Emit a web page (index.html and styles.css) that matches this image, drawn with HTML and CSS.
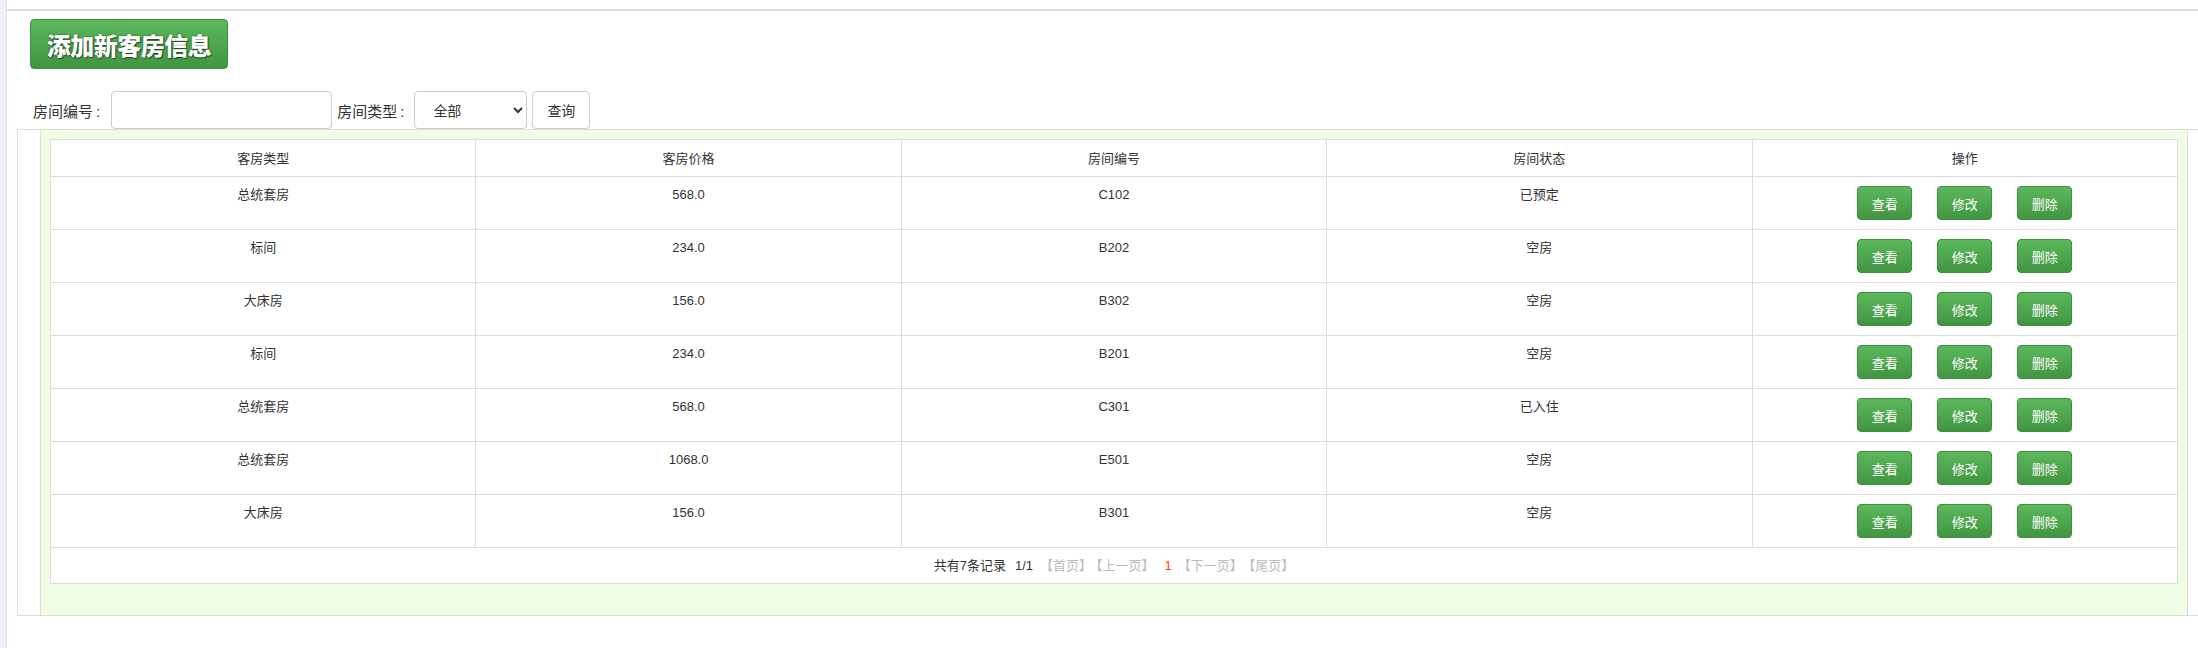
FILE: index.html
```html
<!DOCTYPE html>
<html lang="zh-CN">
<head>
<meta charset="utf-8">
<title>客房信息</title>
<link rel="stylesheet" href="styles.css">
</head>
<body>
<div class="app">
  <div class="side"></div>
  <div class="main">
    <div class="topbar"></div>
    <div class="actions"><button class="btn-add" type="button">添加新客房信息</button></div>
    <form class="search">
      <label class="lbl">房间编号<span class="colon">:</span></label>
      <input class="txt" type="text">
      <label class="lbl lbl-type">房间类型<span class="colon">:</span></label>
      <select class="sel"><option>全部</option></select>
      <button class="btn-query" type="button">查询</button>
    </form>
    <div class="box">
      <div class="box-left"></div>
      <div class="box-main">
        <table class="grid">
          <thead>
            <tr><th>客房类型</th><th>客房价格</th><th>房间编号</th><th>房间状态</th><th>操作</th></tr>
          </thead>
          <tbody>
            <tr><td>总统套房</td><td>568.0</td><td>C102</td><td>已预定</td><td class="op"><div class="ops"><button class="btn-sm">查看</button><button class="btn-sm">修改</button><button class="btn-sm">删除</button></div></td></tr>
            <tr><td>标间</td><td>234.0</td><td>B202</td><td>空房</td><td class="op"><div class="ops"><button class="btn-sm">查看</button><button class="btn-sm">修改</button><button class="btn-sm">删除</button></div></td></tr>
            <tr><td>大床房</td><td>156.0</td><td>B302</td><td>空房</td><td class="op"><div class="ops"><button class="btn-sm">查看</button><button class="btn-sm">修改</button><button class="btn-sm">删除</button></div></td></tr>
            <tr><td>标间</td><td>234.0</td><td>B201</td><td>空房</td><td class="op"><div class="ops"><button class="btn-sm">查看</button><button class="btn-sm">修改</button><button class="btn-sm">删除</button></div></td></tr>
            <tr><td>总统套房</td><td>568.0</td><td>C301</td><td>已入住</td><td class="op"><div class="ops"><button class="btn-sm">查看</button><button class="btn-sm">修改</button><button class="btn-sm">删除</button></div></td></tr>
            <tr><td>总统套房</td><td>1068.0</td><td>E501</td><td>空房</td><td class="op"><div class="ops"><button class="btn-sm">查看</button><button class="btn-sm">修改</button><button class="btn-sm">删除</button></div></td></tr>
            <tr><td>大床房</td><td>156.0</td><td>B301</td><td>空房</td><td class="op"><div class="ops"><button class="btn-sm">查看</button><button class="btn-sm">修改</button><button class="btn-sm">删除</button></div></td></tr>
            <tr class="pager-row"><td colspan="5"><span class="pg-total">共有7条记录</span><span class="pg-num">1/1</span><span class="pg-off pg-first">【首页】</span><span class="pg-off pg-prev">【上一页】</span><span class="pg-cur">1</span><span class="pg-off pg-next">【下一页】</span><span class="pg-off pg-last">【尾页】</span></td></tr>
          </tbody>
        </table>
      </div>
      <div class="box-right"></div>
    </div>
  </div>
</div>
</body>
</html>
```

FILE: styles.css
```css
html, body {
  margin: 0;
  padding: 0;
  background: #fff;
}
body {
  font-family: "Liberation Sans", "Noto Sans CJK SC", sans-serif;
  font-size: 13px;
  color: #333;
  overflow: hidden;
}
.app {
  display: flex;
  height: 648px;
}
.side {
  flex: none;
  width: 6px;
  background: #eef0f5;
  border-right: 1px solid #e1e3ea;
}
.main {
  flex: 1;
  min-width: 0;
}
.topbar {
  height: 9px;
  border-bottom: 2px solid #dcdcdc;
}
.actions {
  padding: 8px 0 0 23px;
}
.btn-add {
  box-sizing: border-box;
  width: 198px;
  height: 50px;
  padding: 0;
  border: 1px solid #3e8f3e;
  border-radius: 4px;
  background: linear-gradient(#5cb85c, #419641);
  color: #fff;
  font-family: "Noto Sans CJK SC", sans-serif;
  font-size: 24px;
  font-weight: 900;
  letter-spacing: -0.5px;
  text-shadow: 0 0 2px rgba(20, 60, 20, 0.8), 1px 1px 1px rgba(0, 0, 0, 0.5);
  cursor: pointer;
}
.search {
  display: flex;
  align-items: center;
  height: 38px;
  margin: 22px 0 0 0;
  padding-left: 26px;
}
.lbl {
  font-family: "Noto Sans CJK SC", sans-serif;
  font-size: 15px;
  color: #333;
  white-space: nowrap;
}
.colon {
  font-family: "Liberation Sans", sans-serif;
  margin-left: 3px;
}
.txt {
  box-sizing: border-box;
  width: 221px;
  height: 38px;
  margin-left: 11px;
  border: 1px solid #ccc;
  border-radius: 4px;
  padding: 0 8px;
  font-size: 14px;
}
.lbl-type {
  margin-left: 5px;
}
.sel {
  box-sizing: border-box;
  width: 113px;
  height: 38px;
  margin-left: 10px;
  padding: 0 8px 0 14px;
  border: 1px solid #ccc;
  border-radius: 4px;
  background: #fff;
  color: #333;
  font-family: "Noto Sans CJK SC", sans-serif;
  font-size: 14px;
}
.btn-query {
  box-sizing: border-box;
  width: 58px;
  height: 38px;
  margin-left: 5px;
  border: 1px solid #ccc;
  border-radius: 4px;
  background: #fff;
  color: #333;
  font-family: "Noto Sans CJK SC", sans-serif;
  font-size: 14px;
  padding: 0;
}
.box {
  display: flex;
  margin-left: 10px;
  border: 1px solid #ddd;
  border-right: 0;
}
.box-left {
  flex: none;
  width: 22px;
  border-right: 1px solid #ddd;
}
.box-main {
  flex: 1;
  min-width: 0;
  background: #f0fde5;
  border-right: 1px solid #ddd;
  padding: 9px 9px 31px 9px;
}
.box-right {
  flex: none;
  width: 10px;
}
.grid {
  width: 100%;
  table-layout: fixed;
  border-collapse: collapse;
  background: #fff;
  border: 1px solid #ddd;
}
.grid th, .grid td {
  border: 1px solid #ddd;
  padding: 9px 8px;
  line-height: 18px;
  font-size: 13px;
  font-weight: normal;
  text-align: center;
  vertical-align: top;
  color: #333;
  font-family: "Liberation Sans", "Noto Sans CJK SC", sans-serif;
}
.grid th {
  vertical-align: middle;
  font-family: "Noto Sans CJK SC", sans-serif;
}
.ops {
  display: flex;
  justify-content: center;
  gap: 25px;
}
.btn-sm {
  box-sizing: border-box;
  width: 55px;
  height: 34px;
  padding: 0;
  border: 1px solid #3e8f3e;
  border-radius: 4px;
  background: linear-gradient(#5cb85c, #419641);
  color: #fff;
  font-family: "Noto Sans CJK SC", sans-serif;
  font-size: 13px;
  cursor: pointer;
}
.grid .pager-row td {
  vertical-align: middle;
  line-height: 17px;
}
.pg-num {
  margin-left: 9px;
}
.pg-off {
  color: #bbb;
}
.pg-first {
  margin-left: 7px;
}
.pg-prev {
  margin-left: 4px;
}
.pg-cur {
  color: #ff3c00;
  margin-left: 10px;
}
.pg-next {
  margin-left: 6px;
}
.pg-last {
  margin-left: 6px;
}
```
